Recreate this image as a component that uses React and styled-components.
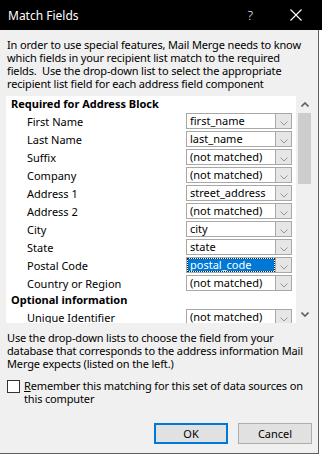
import React from "react";
import styled, { createGlobalStyle } from "styled-components";

const GlobalStyle = createGlobalStyle`
  body {
    margin: 0;
    background: #ffffff;
    font-family: "Noto Sans", "Liberation Sans", sans-serif;
  }
`;

// fields shown in the mapping list
const requiredFields = [
  { label: "First Name", value: "first_name" },
  { label: "Last Name", value: "last_name" },
  { label: "Suffix", value: "(not matched)" },
  { label: "Company", value: "(not matched)" },
  { label: "Address 1", value: "street_address" },
  { label: "Address 2", value: "(not matched)" },
  { label: "City", value: "city" },
  { label: "State", value: "state" },
  { label: "Postal Code", value: "postal_code", selected: true },
  { label: "Country or Region", value: "(not matched)" },
];

const optionalFields = [{ label: "Unique Identifier", value: "(not matched)" }];

const Chevron = ({ up, size = 7, color = "#6e6e6e", width = 1 }) => (
  <svg width={size} height={Math.ceil(size / 2) + 1} viewBox="0 0 8 5">
    <polyline
      points={up ? "0.5,4.5 4,1 7.5,4.5" : "0.5,0.5 4,4 7.5,0.5"}
      fill="none"
      stroke={color}
      strokeWidth={width}
    />
  </svg>
);

const ComboBox = ({ value, selected }) => (
  <Combo>
    <ComboText>
      <ComboValue $selected={selected}>{value}</ComboValue>
    </ComboText>
    <ComboButton>
      <Chevron size={8} color="#8a8a8a" width={0.9} />
    </ComboButton>
  </Combo>
);

export default function App() {
  return (
    <>
      <GlobalStyle />
      <Screen>
        <TitleBar>
          <Title>Match Fields</Title>
          <TitleButtons>
            <HelpMark>?</HelpMark>
            <svg width="12" height="12" viewBox="0 0 12 12">
              <path d="M0.5 0.5 L11.5 11.5 M11.5 0.5 L0.5 11.5" stroke="#fff" strokeWidth="1.1" />
            </svg>
          </TitleButtons>
        </TitleBar>
        <Dialog>
          <Intro>
            In order to use special features, Mail Merge needs to know which
            fields in your recipient list match to the required fields.&nbsp; Use
            the drop-down list to select the appropriate recipient list field for
            each address field component
          </Intro>
          <Panel>
            <List>
              <GroupHeader>Required for Address Block</GroupHeader>
              {requiredFields.map((f) => (
                <FieldRow key={f.label}>
                  <FieldLabel>{f.label}</FieldLabel>
                  <ComboBox value={f.value} selected={f.selected} />
                </FieldRow>
              ))}
              <GroupHeader>Optional information</GroupHeader>
              {optionalFields.map((f) => (
                <FieldRow key={f.label}>
                  <FieldLabel>{f.label}</FieldLabel>
                  <ComboBox value={f.value} />
                </FieldRow>
              ))}
            </List>
            <ScrollBar>
              <ScrollArrow>
                <Chevron up size={8} color="#606060" width={1.6} />
              </ScrollArrow>
              <ScrollTrack>
                <Thumb />
              </ScrollTrack>
              <ScrollArrow>
                <Chevron size={8} color="#606060" width={1.6} />
              </ScrollArrow>
            </ScrollBar>
          </Panel>
          <Help>
            Use the drop-down lists to choose the field from your database that
            corresponds to the address information Mail Merge expects (listed on
            the left.)
          </Help>
          <CheckRow>
            <CheckBox />
            <CheckLabel>
              <u>R</u>emember this matching for this set of data sources on this
              computer
            </CheckLabel>
          </CheckRow>
          <Buttons>
            <Button $default>OK</Button>
            <Button>Cancel</Button>
          </Buttons>
        </Dialog>
      </Screen>
    </>
  );
}

const Screen = styled.div`
  width: 322px;
  height: 456px;
  overflow: hidden;
  background: #ffffff;
`;

const TitleBar = styled.div`
  height: 30px;
  background: #000000;
  color: #ffffff;
  display: flex;
  align-items: center;
  justify-content: space-between;
  padding: 0 20px 0 8px;
`;

const Title = styled.div`
  font-size: 12px;
`;

const TitleButtons = styled.div`
  display: flex;
  align-items: center;
  gap: 37px;
`;

const HelpMark = styled.span`
  font-size: 13px;
  font-weight: 300;
`;

const Dialog = styled.div`
  width: 318px;
  height: 415px;
  background: #f0f0f0;
  border-right: 1px solid #5f5f5f;
  border-bottom: 1px solid #5f5f5f;
  display: flex;
  flex-direction: column;
  padding-top: 8px;
  box-sizing: content-box;
`;

const Intro = styled.p`
  margin: 0 0 6px;
  padding: 0 4px 0 7px;
  font-size: 11px;
  line-height: 13px;
  letter-spacing: -0.15px;
  color: #000;
`;

const Panel = styled.div`
  margin-left: 6px;
  width: 307px;
  height: 227px;
  flex: none;
  display: flex;
`;

const List = styled.div`
  flex: 1;
  background: #ffffff;
  overflow: hidden;
`;

const GroupHeader = styled.div`
  height: 16px;
  line-height: 16px;
  padding-left: 5px;
  font-size: 11px;
  font-weight: 700;
  color: #000;
`;

const FieldRow = styled.div`
  height: 18px;
  display: flex;
  align-items: center;
  padding: 0 4px 0 21px;
`;

const FieldLabel = styled.div`
  flex: 1;
  font-size: 11px;
  color: #000;
`;

const Combo = styled.div`
  width: 106px;
  height: 16px;
  box-sizing: border-box;
  display: flex;
  border: 1px solid #a8a8a8;
  background: #ffffff;
`;

const ComboText = styled.div`
  flex: 1;
  display: flex;
  align-items: center;
  padding: 0 1px;
  border-right: 1px solid #a8a8a8;
  overflow: hidden;
`;

const ComboValue = styled.span`
  flex: 1;
  font-size: 11px;
  line-height: 12px;
  padding: 0 2px;
  white-space: nowrap;
  color: ${(p) => (p.$selected ? "#ffffff" : "#000000")};
  background: ${(p) => (p.$selected ? "#0078d7" : "transparent")};
  outline: ${(p) => (p.$selected ? "1px dotted #0a2a4a" : "none")};
`;

const ComboButton = styled.div`
  width: 15px;
  background: #e6e6e6;
  display: flex;
  align-items: flex-end;
  justify-content: center;
  padding-bottom: 2px;
`;

const ScrollBar = styled.div`
  width: 17px;
  background: #f0f0f0;
  display: flex;
  flex-direction: column;
`;

const ScrollArrow = styled.div`
  height: 17px;
  display: flex;
  align-items: center;
  justify-content: center;
`;

const ScrollTrack = styled.div`
  flex: 1;
  padding: 0 2px;
`;

const Thumb = styled.div`
  height: 71px;
  background: #cdcdcd;
`;

const Help = styled.p`
  margin: 8px 0 0;
  padding: 0 4px 0 7px;
  font-size: 11px;
  line-height: 13px;
  letter-spacing: -0.15px;
  color: #000;
`;

const CheckRow = styled.div`
  margin-top: 9px;
  padding: 0 8px 0 7px;
  display: flex;
  align-items: flex-start;
  gap: 4px;
`;

const CheckBox = styled.div`
  flex: none;
  width: 13px;
  height: 13px;
  box-sizing: border-box;
  margin-top: 1px;
  border: 1px solid #333333;
  background: #ffffff;
`;

const CheckLabel = styled.div`
  font-size: 11px;
  line-height: 13px;
  letter-spacing: -0.15px;
  color: #000;
`;

const Buttons = styled.div`
  margin-top: auto;
  margin-bottom: 9px;
  display: flex;
  justify-content: flex-end;
  gap: 10px;
  padding-right: 6px;
`;

const Button = styled.button`
  width: 74px;
  height: 21px;
  box-sizing: border-box;
  padding: 0;
  font-family: inherit;
  font-size: 11px;
  color: #000;
  background: #e1e1e1;
  border: ${(p) => (p.$default ? "2px solid #0078d7" : "1px solid #adadad")};
`;
